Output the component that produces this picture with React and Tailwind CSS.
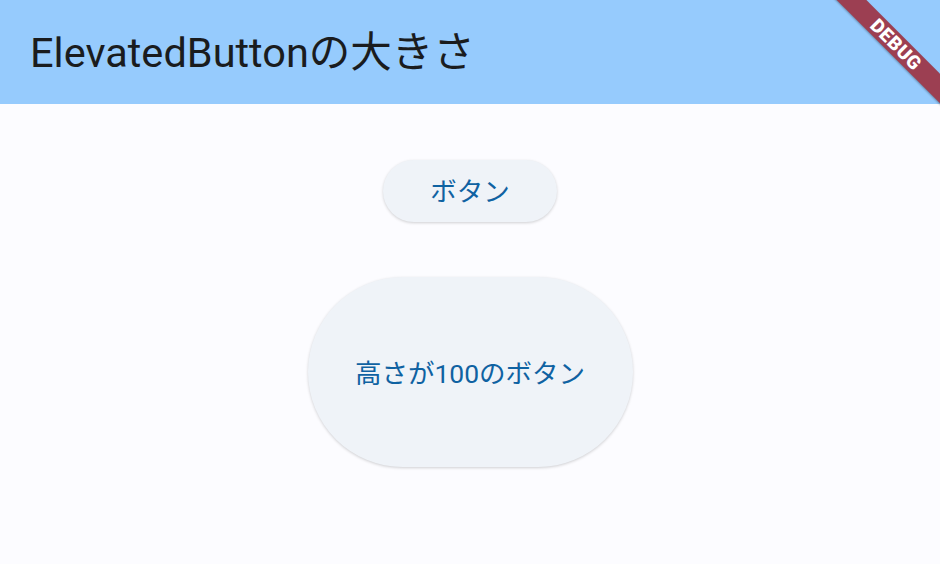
import React from 'react'

const font = { fontFamily: 'Roboto, "Noto Sans CJK JP", sans-serif' }

const DebugBanner = () => (
  <div className="absolute left-[816px] top-[34px] w-[160px] h-[21px] rotate-45 bg-[#9c3f52] flex items-center justify-center shadow-[0_1px_2px_rgba(0,0,0,0.3)]">
    <span className="text-white text-[19px] font-black tracking-[0.5px] leading-none">DEBUG</span>
  </div>
)

const App = () => {
  return (
    <div className="relative w-[940px] h-[564px] overflow-hidden bg-[#fcfcff]" style={font}>
      {/* App bar */}
      <div className="h-[104px] bg-[#96cbfd] flex items-center px-[30px] pt-[2px]">
        <h1 className="text-[41.5px] text-[#1a1c1e] leading-none">ElevatedButtonの大きさ</h1>
      </div>

      {/* Body */}
      <div className="flex flex-col items-center pt-[56px] gap-[55px]">
        <button className="h-[62px] w-[174px] pt-[3px] rounded-full bg-[#eff3f8] text-[#0f62a2] text-[26.5px] leading-none shadow-[0_1px_3px_rgba(0,0,0,0.18)]">
          ボタン
        </button>
        <button className="h-[190px] w-[325px] pt-[4px] rounded-full bg-[#eff3f8] text-[#0f62a2] text-[26.5px] leading-none shadow-[0_1px_3px_rgba(0,0,0,0.18)]">
          高さが100のボタン
        </button>
      </div>

      <DebugBanner />
    </div>
  )
}

export default App
